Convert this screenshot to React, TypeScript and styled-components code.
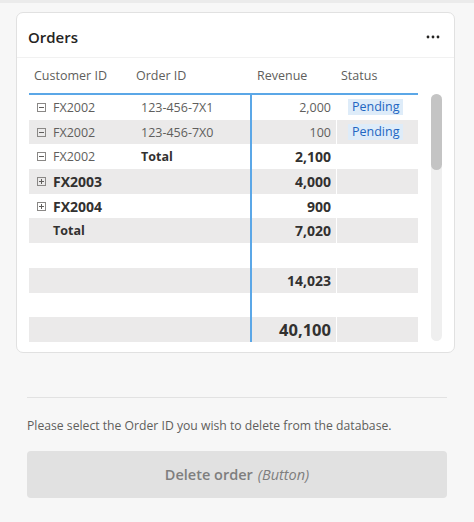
import styled, { createGlobalStyle } from 'styled-components';

const GlobalStyle = createGlobalStyle`
  body {
    margin: 0;
    background: #f7f7f7;
    font-family: "Open Sans", "Noto Sans", sans-serif;
    color: #323130;
  }
`;

const Page = styled.div`
  width: 474px;
  height: 522px;
  box-sizing: border-box;
  border-top: 3px solid #ebebeb;
  overflow: hidden;
`;

const Card = styled.div`
  margin: 9px 19px 0 16px;
  background: #fff;
  border: 1px solid #e1e1e1;
  border-radius: 7px;
`;

const CardHeader = styled.div`
  height: 45px;
  box-sizing: border-box;
  display: flex;
  align-items: center;
  justify-content: space-between;
  padding: 3px 14px 0 11px;
  border-bottom: 1px solid #f1f1f1;
`;

const Title = styled.div`
  font-size: 15px;
  font-weight: 600;
  color: #252423;
`;

const Body = styled.div`
  display: flex;
  padding: 0 11px 10px 12px;
`;

const Table = styled.div`
  width: 389px;
`;

const Grid = styled.div<{ $h: number }>`
  display: grid;
  grid-template-columns: 102px 119px 86px 82px;
  height: ${(p) => p.$h}px;
`;

const HeadRow = styled(Grid)`
  border-bottom: 2px solid #5ba7e7;
`;

const HeadCell = styled.div<{ $pad: number }>`
  display: flex;
  align-items: center;
  padding-left: ${(p) => p.$pad}px;
  font-size: 12.5px;
  color: #605e5c;
`;

const Cell = styled.div<{ $shade?: boolean }>`
  display: flex;
  align-items: center;
  background: ${(p) => (p.$shade ? '#ebeaea' : '#fff')};
  min-width: 0;
  white-space: nowrap;
`;

const NameCell = styled(Cell)`
  padding-left: 8px;
  gap: 7px;
`;

const OrderCell = styled(Cell)`
  padding-left: 10px;
`;

const ValueCell = styled(Cell)`
  justify-content: flex-end;
  padding-right: 5px;
  border-left: 2px solid #5ba7e7;
`;

const StatusCell = styled(Cell)`
  margin-left: 1px;
  padding-left: 11px;
`;

const Text = styled.span<{ $bold?: boolean; $size?: number }>`
  font-size: ${(p) => p.$size ?? 12.5}px;
  font-weight: ${(p) => (p.$bold ? 700 : 400)};
  color: ${(p) => (p.$bold ? '#323130' : '#605e5c')};
`;

const Toggle = styled.span`
  width: 9px;
  height: 9px;
  flex: none;
  display: inline-flex;
`;

const Spacer = styled.span`
  width: 9px;
  flex: none;
`;

const Badge = styled.span`
  display: inline-block;
  background: #deecf9;
  color: #2266c2;
  font-size: 12.5px;
  line-height: 16px;
  padding: 0 4px;
`;

const ScrollColumn = styled.div`
  margin-left: 13px;
  padding-top: 36px;
`;

const Track = styled.div`
  width: 11px;
  height: 247px;
  border-radius: 6px;
  background: #efefef;
  display: flex;
`;

const Thumb = styled.div`
  width: 11px;
  height: 76px;
  border-radius: 6px;
  background: #c4c4c4;
`;

const Footer = styled.div`
  padding: 0 27px;
  margin-top: 44px;
`;

const Divider = styled.div`
  height: 1px;
  background: #e2e2e2;
`;

const Hint = styled.p`
  margin: 19px 0 0;
  font-size: 12.2px;
  color: #605e5c;
  line-height: 17px;
`;

const DeleteButton = styled.button`
  display: flex;
  align-items: center;
  justify-content: center;
  gap: 5px;
  width: 100%;
  height: 47px;
  margin-top: 17px;
  border: none;
  border-radius: 4px;
  background: #e1e1e1;
  font-family: inherit;
  font-size: 14.5px;
  font-weight: 600;
  color: #7e7e7e;
  em {
    font-weight: 400;
  }
`;

const Box = ({ open }: { open: boolean }) => (
  <Toggle>
    <svg width="9" height="9" viewBox="0 0 9 9">
      <rect x="0.5" y="0.5" width="8" height="8" fill="none" stroke="#8a8886" />
      <line x1="2" y1="4.5" x2="7" y2="4.5" stroke="#605e5c" />
      {!open && <line x1="4.5" y1="2" x2="4.5" y2="7" stroke="#605e5c" />}
    </svg>
  </Toggle>
);

type Row = {
  icon?: 'open' | 'closed';
  name?: string;
  nameBold?: boolean;
  order?: string;
  orderBold?: boolean;
  value?: string;
  valueBold?: boolean;
  valueSize?: number;
  status?: string;
};

const rows: Row[] = [
  { icon: 'open', name: 'FX2002', order: '123-456-7X1', value: '2,000', status: 'Pending' },
  { icon: 'open', name: 'FX2002', order: '123-456-7X0', value: '100', status: 'Pending' },
  { icon: 'open', name: 'FX2002', order: 'Total', orderBold: true, value: '2,100', valueBold: true, valueSize: 14 },
  { icon: 'closed', name: 'FX2003', nameBold: true, value: '4,000', valueBold: true, valueSize: 14 },
  { icon: 'closed', name: 'FX2004', nameBold: true, value: '900', valueBold: true, valueSize: 14 },
  { name: 'Total', nameBold: true, value: '7,020', valueBold: true, valueSize: 14 },
  {},
  { value: '14,023', valueBold: true, valueSize: 14 },
  {},
  { value: '40,100', valueBold: true, valueSize: 16.5 },
];

const App = () => (
  <Page>
    <GlobalStyle />
    <Card>
      <CardHeader>
        <Title>Orders</Title>
        <svg width="14" height="4" viewBox="0 0 14 4">
          <circle cx="2" cy="2" r="1.4" fill="#252423" />
          <circle cx="7" cy="2" r="1.4" fill="#252423" />
          <circle cx="12" cy="2" r="1.4" fill="#252423" />
        </svg>
      </CardHeader>
      <Body>
        <Table>
          <HeadRow $h={35}>
            <HeadCell $pad={5}>Customer ID</HeadCell>
            <HeadCell $pad={5}>Order ID</HeadCell>
            <HeadCell $pad={7}>Revenue</HeadCell>
            <HeadCell $pad={5}>Status</HeadCell>
          </HeadRow>
          {rows.map((r, i) => {
            const shade = i % 2 === 1;
            return (
              <Grid key={i} $h={24.7}>
                <NameCell $shade={shade}>
                  {r.icon ? <Box open={r.icon === 'open'} /> : <Spacer />}
                  {r.name && (
                    <Text $bold={r.nameBold} $size={r.nameBold && r.icon ? 14 : 12.5}>
                      {r.name}
                    </Text>
                  )}
                </NameCell>
                <OrderCell $shade={shade}>
                  {r.order && <Text $bold={r.orderBold}>{r.order}</Text>}
                </OrderCell>
                <ValueCell $shade={shade}>
                  {r.value && (
                    <Text $bold={r.valueBold} $size={r.valueSize}>
                      {r.value}
                    </Text>
                  )}
                </ValueCell>
                <StatusCell $shade={shade}>{r.status && <Badge>{r.status}</Badge>}</StatusCell>
              </Grid>
            );
          })}
        </Table>
        <ScrollColumn>
          <Track>
            <Thumb />
          </Track>
        </ScrollColumn>
      </Body>
    </Card>
    <Footer>
      <Divider />
      <Hint>Please select the Order ID you wish to delete from the database.</Hint>
      <DeleteButton>
        Delete order <em>(Button)</em>
      </DeleteButton>
    </Footer>
  </Page>
);

export default App;
